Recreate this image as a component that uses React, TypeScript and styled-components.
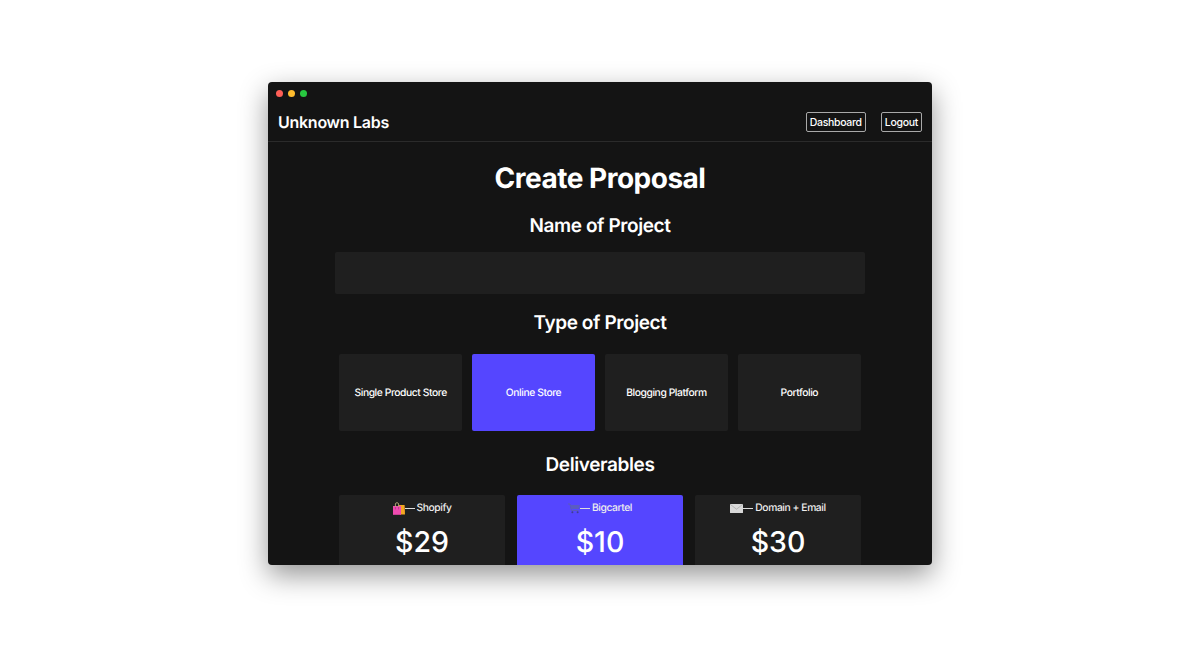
import React from 'react';
import styled, {createGlobalStyle} from 'styled-components';

const GlobalStyle = createGlobalStyle`
    html, body {
        margin: 0;
        padding: 0;
        background: #fff;
        font-family: Inter, "Liberation Sans", sans-serif;
        text-rendering: geometricPrecision;
    }
    * {
        box-sizing: border-box;
    }
`

const Page = styled.div`
    width: 1200px;
    height: 668px;
    padding-top: 82px;
    display: flex;
    justify-content: center;
    align-items: flex-start;
    overflow: hidden;
`

const Window = styled.div`
    width: 664px;
    height: 483px;
    background: #141414;
    border-radius: 4px;
    overflow: hidden;
    color: #fff;
    box-shadow: 0 10px 28px rgba(0, 0, 0, 0.42);
`

const TitleBar = styled.div`
    height: 22px;
    padding: 7.5px 0 0 7.5px;
    display: flex;
    gap: 4.5px;
`

const Light = styled.span<{$color: string}>`
    width: 7.5px;
    height: 7.5px;
    border-radius: 50%;
    background: ${p => p.$color};
`

const NavBar = styled.header`
    height: 38px;
    padding: 0 10px 1px;
    display: flex;
    align-items: center;
    justify-content: space-between;
    border-bottom: 1px solid #2b2b2b;
`

const Brand = styled.div`
    font-size: 16px;
    font-weight: 600;
    letter-spacing: -0.27px;
`

const NavLinks = styled.nav`
    display: flex;
    gap: 15px;
`

const NavButton = styled.button`
    height: 20px;
    padding: 0 3px;
    background: transparent;
    border: 1px solid #a9a9a9;
    border-radius: 2px;
    color: #fff;
    font-family: inherit;
    font-size: 10.5px;
    font-weight: 500;
    letter-spacing: -0.3px;
`

const Main = styled.main`
    display: flex;
    flex-direction: column;
    align-items: center;
    padding-top: 18px;
`

const Title = styled.h1`
    margin: 0;
    font-size: 28px;
    line-height: 36px;
    font-weight: 700;
    letter-spacing: -0.5px;
`

const Heading = styled.h2<{$top: number}>`
    margin: ${p => p.$top}px 0 0;
    font-size: 19px;
    line-height: 24px;
    font-weight: 600;
    letter-spacing: -0.4px;
`

const NameInput = styled.input`
    display: block;
    width: 530px;
    height: 42px;
    margin-top: 14px;
    background: #1f1f1f;
    border: none;
    border-radius: 2px;
`

const TypeRow = styled.div`
    width: 522px;
    margin-top: 19px;
    display: grid;
    grid-template-columns: repeat(4, 1fr);
    gap: 9.67px;
`

const TypeCard = styled.div<{$active?: boolean}>`
    height: 77px;
    display: flex;
    align-items: center;
    justify-content: center;
    border-radius: 2px;
    background: ${p => (p.$active ? '#5546ff' : '#1f1f1f')};
    font-size: 10.3px;
    font-weight: 500;
    letter-spacing: -0.42px;
`

const DeliverableRow = styled.div`
    width: 522px;
    margin-top: 18px;
    display: grid;
    grid-template-columns: repeat(3, 1fr);
    gap: 12px;
`

const DeliverableCard = styled.div<{$active?: boolean}>`
    height: 90px;
    padding-top: 6px;
    display: flex;
    flex-direction: column;
    align-items: center;
    border-radius: 2px;
    background: ${p => (p.$active ? '#5546ff' : '#1f1f1f')};
`

const DeliverableName = styled.div`
    height: 14px;
    display: flex;
    align-items: center;
    font-size: 10.3px;
    font-weight: 500;
    letter-spacing: -0.42px;
    color: #eee;
`

const Dash = styled.span`
    width: 10px;
    height: 1px;
    margin-right: 2px;
    background: #ddd;
`

const Price = styled.div`
    margin-top: 9px;
    font-size: 28.5px;
    line-height: 36px;
    font-weight: 500;
`

const BagsIcon = () => (
    <svg width="12" height="13" viewBox="0 0 12 13">
        <path d="M6 3h5.6l.4 9.5H7z" fill="#f5a623"/>
        <path d="M0 4h8v8.8H0z" fill="#f04bb0"/>
        <path d="M2.4 5V1.8C2.4.4 5.6.4 5.6 1.8V5" fill="none" stroke="#b9b07a" strokeWidth="0.9"/>
        <path d="M2.4 5v2.4M5.6 5v2.4" stroke="#a82c78" strokeWidth="0.7"/>
    </svg>
)

const CartIcon = () => (
    <svg width="12" height="11" viewBox="0 0 12 11">
        <path d="M0 1h2l1.4 6.5h7" fill="none" stroke="#5b5bb5" strokeWidth="0.9"/>
        <path d="M2.4 2H12l-1.2 4H3.2z" fill="#5a5cc0"/>
        <circle cx="4.4" cy="9.3" r="1" fill="#3f3f8f"/>
        <circle cx="9.6" cy="9.3" r="1" fill="#3f3f8f"/>
    </svg>
)

const EnvelopeIcon = () => (
    <svg width="13" height="9" viewBox="0 0 13 9">
        <rect width="13" height="9" rx="0.6" fill="#d8d8d8"/>
        <path d="M0.3 0.4 6.5 5.2 12.7 0.4" fill="none" stroke="#9c9c9c" strokeWidth="0.6"/>
    </svg>
)

const TYPES = ['Single Product Store', 'Online Store', 'Blogging Platform', 'Portfolio']

const DELIVERABLES = [
    {name: 'Shopify', price: '$29', icon: <BagsIcon/>},
    {name: 'Bigcartel', price: '$10', icon: <CartIcon/>, active: true},
    {name: 'Domain + Email', price: '$30', icon: <EnvelopeIcon/>},
]

const App = () => (
    <Page>
        <GlobalStyle/>
        <Window>
            <TitleBar>
                <Light $color="#ff5f57"/>
                <Light $color="#febc2e"/>
                <Light $color="#28c840"/>
            </TitleBar>
            <NavBar>
                <Brand>Unknown Labs</Brand>
                <NavLinks>
                    <NavButton>Dashboard</NavButton>
                    <NavButton>Logout</NavButton>
                </NavLinks>
            </NavBar>
            <Main>
                <Title>Create Proposal</Title>
                <Heading $top={18}>Name of Project</Heading>
                <NameInput/>
                <Heading $top={17}>Type of Project</Heading>
                <TypeRow>
                    {TYPES.map(type => (
                        <TypeCard key={type} $active={type === 'Online Store'}>{type}</TypeCard>
                    ))}
                </TypeRow>
                <Heading $top={22}>Deliverables</Heading>
                <DeliverableRow>
                    {DELIVERABLES.map(item => (
                        <DeliverableCard key={item.name} $active={item.active}>
                            <DeliverableName>
                                {item.icon}
                                <Dash/>
                                {item.name}
                            </DeliverableName>
                            <Price>{item.price}</Price>
                        </DeliverableCard>
                    ))}
                </DeliverableRow>
            </Main>
        </Window>
    </Page>
);

export default App;
